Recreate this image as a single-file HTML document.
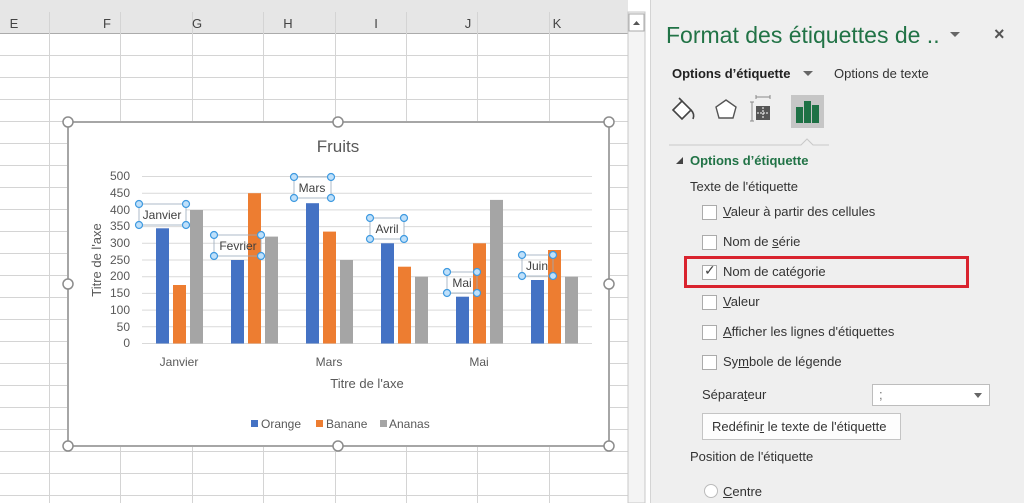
<!DOCTYPE html>
<html><head><meta charset="utf-8"><style>
*{margin:0;padding:0;box-sizing:border-box}
body{width:1024px;height:503px;overflow:hidden;position:relative;background:#fff;font-family:"Liberation Sans",sans-serif;color:#333}
.abs{position:absolute}
#panel{position:absolute;left:650px;top:0;width:374px;height:503px;background:#efefef;border-left:1px solid #d4d4d4}
.t{position:absolute;white-space:nowrap;font-size:13px;color:#333}
.cb{position:absolute;width:15px;height:15px;background:#fff;border:1px solid #ababab}
u{text-decoration:underline}
</style></head><body>
<svg class="abs" style="left:0;top:0" width="650" height="503">
<rect x="0" y="0" width="650" height="503" fill="#fff"/>
<rect x="0" y="0" width="628" height="33" fill="#e6e6e6"/>
<line x1="0" y1="33.5" x2="628" y2="33.5" stroke="#ababab"/>
<g stroke="#d4d4d4">
<line x1="49.5" y1="12" x2="49.5" y2="503"/><line x1="120.5" y1="12" x2="120.5" y2="503"/><line x1="192.5" y1="12" x2="192.5" y2="503"/><line x1="263.5" y1="12" x2="263.5" y2="503"/><line x1="335.5" y1="12" x2="335.5" y2="503"/><line x1="406.5" y1="12" x2="406.5" y2="503"/><line x1="477.5" y1="12" x2="477.5" y2="503"/><line x1="549.5" y1="12" x2="549.5" y2="503"/>
<line x1="0" y1="55.5" x2="628" y2="55.5"/><line x1="0" y1="77.5" x2="628" y2="77.5"/><line x1="0" y1="99.5" x2="628" y2="99.5"/><line x1="0" y1="121.5" x2="628" y2="121.5"/><line x1="0" y1="143.5" x2="628" y2="143.5"/><line x1="0" y1="165.5" x2="628" y2="165.5"/><line x1="0" y1="187.5" x2="628" y2="187.5"/><line x1="0" y1="209.5" x2="628" y2="209.5"/><line x1="0" y1="231.5" x2="628" y2="231.5"/><line x1="0" y1="253.5" x2="628" y2="253.5"/><line x1="0" y1="275.5" x2="628" y2="275.5"/><line x1="0" y1="297.5" x2="628" y2="297.5"/><line x1="0" y1="319.5" x2="628" y2="319.5"/><line x1="0" y1="341.5" x2="628" y2="341.5"/><line x1="0" y1="363.5" x2="628" y2="363.5"/><line x1="0" y1="385.5" x2="628" y2="385.5"/><line x1="0" y1="407.5" x2="628" y2="407.5"/><line x1="0" y1="429.5" x2="628" y2="429.5"/><line x1="0" y1="451.5" x2="628" y2="451.5"/><line x1="0" y1="473.5" x2="628" y2="473.5"/><line x1="0" y1="495.5" x2="628" y2="495.5"/>
</g>
<g font-size="13" fill="#444" text-anchor="middle" font-family="Liberation Sans">
<text x="14" y="28">E</text><text x="107" y="28">F</text><text x="197" y="28">G</text><text x="288" y="28">H</text><text x="376" y="28">I</text><text x="468" y="28">J</text><text x="557" y="28">K</text></g>
<rect x="628" y="12" width="17" height="491" fill="#f4f4f4" stroke="#c8c8c8"/>
<rect x="629" y="14" width="15" height="17" fill="#fff" stroke="#aaa"/>
<path d="M633 25 L636.5 21 L640 25Z" fill="#555"/>
<!-- chart -->
<rect x="68" y="122" width="541" height="324" fill="#fff" stroke="#a6a6a6" stroke-width="2"/>
<g stroke="#d9d9d9"><line x1="142" y1="176.5" x2="592" y2="176.5"/><line x1="142" y1="193.2" x2="592" y2="193.2"/><line x1="142" y1="209.9" x2="592" y2="209.9"/><line x1="142" y1="226.6" x2="592" y2="226.6"/><line x1="142" y1="243.3" x2="592" y2="243.3"/><line x1="142" y1="260" x2="592" y2="260"/><line x1="142" y1="276.7" x2="592" y2="276.7"/><line x1="142" y1="293.4" x2="592" y2="293.4"/><line x1="142" y1="310.1" x2="592" y2="310.1"/><line x1="142" y1="326.8" x2="592" y2="326.8"/><line x1="142" y1="343.5" x2="592" y2="343.5"/></g>
<g font-size="12" fill="#595959" text-anchor="end"><text x="130" y="180">500</text><text x="130" y="197">450</text><text x="130" y="214">400</text><text x="130" y="230">350</text><text x="130" y="247">300</text><text x="130" y="264">250</text><text x="130" y="280">200</text><text x="130" y="297">150</text><text x="130" y="314">100</text><text x="130" y="331">50</text><text x="130" y="347">0</text></g>
<g>
<rect x="156" y="228.3" width="13" height="115.2" fill="#4472c4"/><rect x="173" y="285" width="13" height="58.5" fill="#ed7d31"/><rect x="190" y="210" width="13" height="133.5" fill="#a5a5a5"/>
<rect x="231" y="260" width="13" height="83.5" fill="#4472c4"/><rect x="248" y="193.2" width="13" height="150.3" fill="#ed7d31"/><rect x="265" y="236.6" width="13" height="106.9" fill="#a5a5a5"/>
<rect x="306" y="203.2" width="13" height="140.3" fill="#4472c4"/><rect x="323" y="231.6" width="13" height="111.9" fill="#ed7d31"/><rect x="340" y="260" width="13" height="83.5" fill="#a5a5a5"/>
<rect x="381" y="243.3" width="13" height="100.2" fill="#4472c4"/><rect x="398" y="266.7" width="13" height="76.8" fill="#ed7d31"/><rect x="415" y="276.7" width="13" height="66.8" fill="#a5a5a5"/>
<rect x="456" y="296.7" width="13" height="46.8" fill="#4472c4"/><rect x="473" y="243.3" width="13" height="100.2" fill="#ed7d31"/><rect x="490" y="199.9" width="13" height="143.6" fill="#a5a5a5"/>
<rect x="531" y="280" width="13" height="63.5" fill="#4472c4"/><rect x="548" y="250" width="13" height="93.5" fill="#ed7d31"/><rect x="565" y="276.7" width="13" height="66.8" fill="#a5a5a5"/>
</g>
<text x="338" y="152" font-size="17" fill="#595959" text-anchor="middle">Fruits</text>
<g font-size="12" fill="#595959" text-anchor="middle"><text x="179" y="366">Janvier</text><text x="329" y="366">Mars</text><text x="479" y="366">Mai</text></g>
<text x="367" y="388" font-size="13" fill="#595959" text-anchor="middle">Titre de l'axe</text>
<text transform="translate(101,260) rotate(-90)" font-size="13" fill="#595959" text-anchor="middle">Titre de l'axe</text>
<g font-size="12" fill="#595959"><rect x="251" y="420" width="7" height="7" fill="#4472c4"/><text x="261" y="428">Orange</text><rect x="316" y="420" width="7" height="7" fill="#ed7d31"/><text x="326" y="428">Banane</text><rect x="380" y="420" width="7" height="7" fill="#a5a5a5"/><text x="389" y="428">Ananas</text></g>
<!-- data labels -->
<g font-size="12" fill="#404040" text-anchor="middle">
<g><rect x="139" y="204" width="47" height="21" fill="#fff" stroke="#9ab" stroke-width=".8"/><text x="162" y="219">Janvier</text></g>
<g><rect x="214" y="235" width="47" height="21" fill="none" stroke="#9ab" stroke-width=".8"/><text x="238" y="250">Fevrier</text></g>
<g><rect x="294" y="177" width="37" height="21" fill="#fff" stroke="#9ab" stroke-width=".8"/><text x="312" y="192">Mars</text></g>
<g><rect x="370" y="218" width="34" height="21" fill="#fff" stroke="#9ab" stroke-width=".8"/><text x="387" y="233">Avril</text></g>
<g><rect x="447" y="272" width="30" height="21" fill="none" stroke="#9ab" stroke-width=".8"/><text x="462" y="287">Mai</text></g>
<g><rect x="522" y="255" width="31" height="21" fill="none" stroke="#9ab" stroke-width=".8"/><text x="537" y="270">Juin</text></g>
</g>
<g fill="#bfe0fa" stroke="#3f9ae0" stroke-width="1.2">
<circle cx="139" cy="204" r="3.5"/><circle cx="186" cy="204" r="3.5"/><circle cx="139" cy="225" r="3.5"/><circle cx="186" cy="225" r="3.5"/>
<circle cx="214" cy="235" r="3.5"/><circle cx="261" cy="235" r="3.5"/><circle cx="214" cy="256" r="3.5"/><circle cx="261" cy="256" r="3.5"/>
<circle cx="294" cy="177" r="3.5"/><circle cx="331" cy="177" r="3.5"/><circle cx="294" cy="198" r="3.5"/><circle cx="331" cy="198" r="3.5"/>
<circle cx="370" cy="218" r="3.5"/><circle cx="404" cy="218" r="3.5"/><circle cx="370" cy="239" r="3.5"/><circle cx="404" cy="239" r="3.5"/>
<circle cx="447" cy="272" r="3.5"/><circle cx="477" cy="272" r="3.5"/><circle cx="447" cy="293" r="3.5"/><circle cx="477" cy="293" r="3.5"/>
<circle cx="522" cy="255" r="3.5"/><circle cx="553" cy="255" r="3.5"/><circle cx="522" cy="276" r="3.5"/><circle cx="553" cy="276" r="3.5"/>
</g>
<g fill="#fff" stroke="#8c8c8c" stroke-width="1.5">
<circle cx="68" cy="122" r="5"/><circle cx="338" cy="122" r="5"/><circle cx="609" cy="122" r="5"/><circle cx="68" cy="284" r="5"/><circle cx="609" cy="284" r="5"/><circle cx="68" cy="446" r="5"/><circle cx="338" cy="446" r="5"/><circle cx="609" cy="446" r="5"/>
</g>
</svg>
<div id="panel">
<div class="t" style="left:15px;top:22px;font-size:23px;color:#217346">Format des étiquettes de ..</div>
<div class="abs" style="left:299px;top:32px;border-left:5px solid transparent;border-right:5px solid transparent;border-top:5px solid #666"></div>
<div class="t" style="left:343px;top:24px;font-size:18px;color:#555;font-weight:bold">×</div>
<div class="t" style="left:21px;top:66px;font-weight:bold;color:#222">Options d’étiquette</div>
<div class="abs" style="left:152px;top:71px;border-left:5px solid transparent;border-right:5px solid transparent;border-top:5px solid #666"></div>
<div class="t" style="left:183px;top:66px;color:#333">Options de texte</div>
<svg class="abs" style="left:18px;top:94px" width="160" height="54">
<path d="M4 16 L13 7 L22 16 L13 25Z" fill="#fff" stroke="#444" stroke-width="1.6"/><path d="M10 4 L13 7" stroke="#444" stroke-width="1.6"/><path d="M22 16 Q26 20 24 25" fill="none" stroke="#444" stroke-width="1.6"/>
<path d="M57 6 L67 13 L64 24 L50 24 L47 13Z" fill="#fff" stroke="#555" stroke-width="1.4"/>
<path d="M83 8 V27 M81 8 H85 M81 27 H85 M87 3 H101 M87 1 V5 M101 1 V5" stroke="#888" stroke-width="1"/>
<rect x="87" y="12" width="14" height="14" fill="#555"/><path d="M94 13 V25 M88 19 H100" stroke="#fff" stroke-width="1" stroke-dasharray="2 1"/>
<rect x="122" y="1" width="33" height="33" fill="#c6c6c6"/>
<rect x="127" y="13" width="7" height="16" fill="#1e7145"/><rect x="135" y="7" width="7" height="22" fill="#1e7145"/><rect x="143" y="11" width="7" height="18" fill="#1e7145"/>
<path d="M-3 51 H132 L138 45 L144 51 H345" fill="none" stroke="#c8c8c8"/>
</svg>
<div class="abs" style="left:25px;top:157px;border-left:7px solid transparent;border-bottom:7px solid #444"></div>
<div class="t" style="left:39px;top:153px;font-weight:bold;color:#217346">Options d’étiquette</div>
<div class="t" style="left:39px;top:179px">Texte de l'étiquette</div>
<div class="cb" style="left:51px;top:205px"></div><div class="t" style="left:72px;top:204px"><u>V</u>aleur à partir des cellules</div>
<div class="cb" style="left:51px;top:235px"></div><div class="t" style="left:72px;top:234px">Nom de <u>s</u>érie</div>
<div class="cb" style="left:51px;top:265px"></div><div class="t" style="left:53px;top:262px;font-size:14px;color:#444">✓</div><div class="t" style="left:72px;top:264px">Nom de caté<u>g</u>orie</div>
<div class="abs" style="left:33px;top:256px;width:285px;height:32px;border:3px solid #d9232e"></div>
<div class="cb" style="left:51px;top:295px"></div><div class="t" style="left:72px;top:294px"><u>V</u>aleur</div>
<div class="cb" style="left:51px;top:325px"></div><div class="t" style="left:72px;top:324px"><u>A</u>fficher les lignes d'étiquettes</div>
<div class="cb" style="left:51px;top:355px"></div><div class="t" style="left:72px;top:354px">Sy<u>m</u>bole de légende</div>
<div class="t" style="left:51px;top:387px">Sépara<u>t</u>eur</div>
<div class="abs" style="left:221px;top:384px;width:118px;height:22px;background:#fff;border:1px solid #bdbdbd"></div>
<div class="t" style="left:228px;top:387px;color:#777">;</div>
<div class="abs" style="left:323px;top:393px;border-left:4px solid transparent;border-right:4px solid transparent;border-top:5px solid #666"></div>
<div class="abs" style="left:51px;top:413px;width:199px;height:27px;background:#fdfdfd;border:1px solid #c4c4c4"></div>
<div class="t" style="left:61px;top:419px">Redéfini<u>r</u> le texte de l'étiquette</div>
<div class="t" style="left:39px;top:449px">Position de l'étiquette</div>
<div class="abs" style="left:53px;top:484px;width:14px;height:14px;border-radius:50%;background:#fff;border:1px solid #bbb"></div>
<div class="t" style="left:72px;top:484px"><u>C</u>entre</div>
</div>
</body></html>
